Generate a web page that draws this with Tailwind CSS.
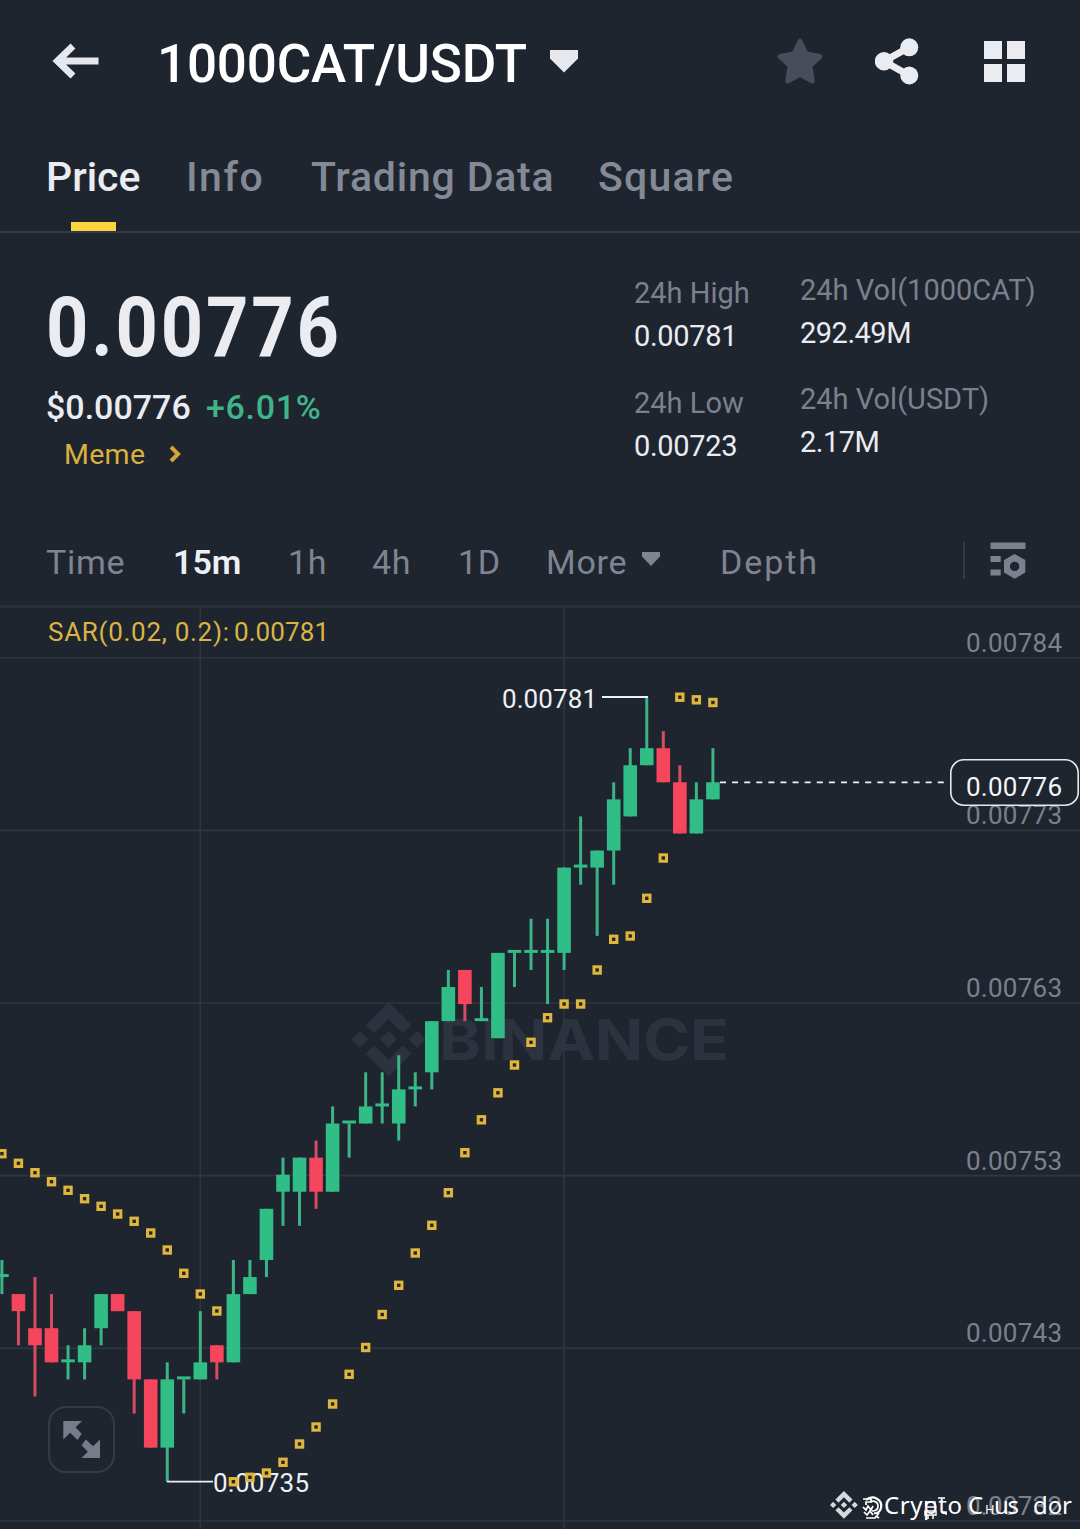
<!DOCTYPE html>
<html lang="en">
<head>
  <meta charset="UTF-8">
  <meta name="viewport" content="width=device-width, initial-scale=1.0">
  <title>1000CAT/USDT</title>
  <script src="https://cdn.jsdelivr.net/npm/@tailwindcss/browser@4"></script>
</head>
<body class="w-[1080px] h-[1529px] overflow-hidden bg-[#1f252f] text-[#eaecf1] font-[Roboto,sans-serif]">
  <!-- Header -->
  <header class="h-[122px] flex items-center pl-[52px] pr-[55px]">
    <svg class="w-[47px] h-[38px] shrink-0" viewBox="52 42.5 47 38" fill="none" stroke="#e6e8ee" stroke-width="7">
      <path d="M73 46.5L57.5 61.5L73 76.5M58 61.5H98.5"/>
    </svg>
    <h1 class="ml-[58px] mt-[5px] w-[369px] text-[53px] leading-[60px] font-medium text-white tracking-[-0.2px] whitespace-nowrap">1000CAT/USDT</h1>
    <svg class="ml-[24px] w-[28px] h-[23px] shrink-0" viewBox="0 0 28 23" fill="#e6e8ee">
      <path d="M0 0H28V8.5L14 22.5L0 8.5Z"/>
    </svg>
    <div class="ml-auto flex items-center">
      <svg class="w-[46px] h-[47px]" viewBox="777.5 38 46 47" fill="#474d59" stroke="#474d59" stroke-width="5" stroke-linejoin="round">
        <path d="M800.5 41L806.5 54L820.5 56.5L810.3 66L812.8 81L800.5 74.3L788.2 81L790.7 66L780.5 56.5L794.5 54Z"/>
      </svg>
      <svg class="ml-[52px] w-[44px] h-[47px]" viewBox="875.5 38 44 47" fill="#eaecf1" stroke="#eaecf1">
        <path d="M909.8 47.3L884.5 61.3L909.8 75.5" fill="none" stroke-width="7"/>
        <circle cx="909.8" cy="47.3" r="9" stroke="none"/>
        <circle cx="909.8" cy="75.5" r="9" stroke="none"/>
        <circle cx="884.5" cy="61.3" r="9.2" stroke="none"/>
      </svg>
      <svg class="ml-[65px] w-[41px] h-[41px]" viewBox="0 0 41 41" fill="#eaecf1">
        <path d="M0 0H18V18H0ZM23 0H41V18H23ZM0 23H18V41H0ZM23 23H41V41H23Z"/>
      </svg>
    </div>
  </header>

  <!-- Tabs -->
  <nav class="h-[111px] flex pl-[46px] pt-[31px] border-b-2 border-[#333944] text-[41px] leading-[48px] font-medium text-[#848996]">
    <div class="w-[140px] text-[#eaecf1]">
      <div class="h-[69px]">Price</div>
      <div class="ml-[25px] w-[45px] h-[9px] bg-[#f9d43c]"></div>
    </div>
    <div class="w-[125px] tracking-[1.5px]">Info</div>
    <div class="w-[287px] tracking-[0.8px] whitespace-nowrap">Trading Data</div>
    <div class="tracking-[1.2px]">Square</div>
  </nav>

  <!-- Price summary -->
  <section class="h-[286px] flex">
    <div class="w-[634px] pl-[46px] pt-[53px] font-medium">
      <div class="text-[84px] leading-[84px] font-bold tracking-[3.2px] origin-left scale-x-[0.88]">0.00776</div>
      <div class="mt-[17px] flex text-[34px] leading-[40px]">
        <span class="w-[160px]">$0.00776</span>
        <span class="text-[#3fb488] tracking-[0.7px]">+6.01%</span>
      </div>
      <div class="mt-[11px] ml-[18px] flex items-center text-[28.5px] leading-[34px] font-normal text-[#d9b13d]">
        <span class="w-[105px] tracking-[0.3px]">Meme</span>
        <svg class="-mt-[2px] w-[13px] h-[18px]" viewBox="0 0 13 18" fill="none" stroke="#d3a637" stroke-width="4">
          <path d="M2 2L9 9L2 16"/>
        </svg>
      </div>
    </div>
    <div class="w-[166px] pt-[39px] text-[29px] leading-[43px]">
      <div class="text-[#7b808d]">24h High</div>
      <div class="tracking-[-0.3px]">0.00781</div>
      <div class="mt-[24px] text-[#7b808d]">24h Low</div>
      <div class="tracking-[-0.3px]">0.00723</div>
    </div>
    <div class="pt-[36px] text-[29px] leading-[42.5px] whitespace-nowrap">
      <div class="text-[#7b808d]">24h Vol(1000CAT)</div>
      <div class="tracking-[-0.5px]">292.49M</div>
      <div class="mt-[24px] text-[#7b808d]">24h Vol(USDT)</div>
      <div class="tracking-[-0.5px]">2.17M</div>
    </div>
  </section>

  <!-- Interval picker -->
  <div class="h-[89px] flex items-center pl-[46px] pr-[54px] border-b-3 border-[#2a303b] text-[34px] leading-[40px] text-[#7f8491] tracking-[0.7px]">
    <span class="w-[127px]">Time</span>
    <span class="w-[115px] font-semibold text-[#eef0f5] tracking-normal">15m</span>
    <span class="w-[84px]">1h</span>
    <span class="w-[86px]">4h</span>
    <span class="w-[88px]">1D</span>
    <span class="w-[96px]">More</span>
    <svg class="-mt-[6px] w-[18px] h-[14px]" viewBox="0 0 18 14" fill="#7f8491">
      <path d="M0 0H18V4.5L9 14L0 4.5Z"/>
    </svg>
    <span class="ml-[60px] tracking-[1.9px]">Depth</span>
    <div class="ml-auto mr-[25px] -mt-[4px] w-[2px] h-[37px] bg-[#343b46]"></div>
    <svg class="-mt-[4px] w-[36px] h-[37px]" viewBox="990 541.5 36 37" fill="#7c818e">
      <path d="M990.5 542H1025.5V548.5H990.5ZM990.5 555.5H1000.7V561.5H990.5ZM990.5 569H1000.7V575H990.5Z"/>
      <path fill-rule="evenodd" d="M1014.6 553.5L1025.3 559.5V572L1014.6 578.2L1004 572V559.5ZM1014.6 561.2A4.7 4.7 0 1 0 1014.6 570.6A4.7 4.7 0 1 0 1014.6 561.2Z"/>
    </svg>
  </div>

  <!-- Chart -->
  <main class="relative h-[921px]">
    <svg id="chart" class="block w-[1080px] h-[921px]" viewBox="0 608 1080 921" font-size="26">
      <defs>
        <path id="logo" d="M38.73 53.2l24.59-24.58 24.6 24.6 14.3-14.31L63.32 0 24.42 38.9zM0 63.31L14.3 49l14.31 14.31-14.31 14.3zM38.73 73.41l24.59 24.59 24.6-24.6 14.31 14.29-38.91 38.91-38.91-38.88zM98 63.31l14.3-14.31 14.31 14.3-14.31 14.32zM77.83 63.3L63.32 48.78 48.81 63.28l14.51 14.5z"/>
      </defs>
      <!-- watermark -->
      <g fill="#2d333e">
        <use href="#logo" transform="translate(351.5 1002.3) scale(0.585)"/>
        <text x="439" y="1060" font-family="Inter, sans-serif" font-weight="700" font-size="57" textLength="290" lengthAdjust="spacingAndGlyphs">BINANCE</text>
      </g>
      <g id="grid" stroke="#303641" stroke-width="1.6"></g>
      <g id="axis" fill="#7b808d"></g>
      <g id="candles"></g>
      <g fill="#eef0f5">
        <path d="M602 697H648M167 1481.7H213" stroke="#eef0f5" stroke-width="1.8"/>
        <text x="502" y="707.7" textLength="95">0.00781</text>
        <text x="213" y="1491.8" textLength="96">0.00735</text>
      </g>
      <g id="sar" fill="#2a2413" stroke="#dfb740" stroke-width="3"></g>
      <g fill="#d9b445">
        <text x="48" y="640.5" textLength="181">SAR(0.02, 0.2):</text>
        <text x="234" y="640.5" textLength="95">0.00781</text>
      </g>
      <path d="M720 782.3H944" stroke="#eef0f5" stroke-width="1.8" stroke-dasharray="6 6.1"/>
      <rect x="950.8" y="759.8" width="127.4" height="45.4" rx="13" fill="#1f252f" stroke="#e6e8ee" stroke-width="1.6"/>
      <text x="966" y="795.7" fill="#f4f5f8" textLength="96">0.00776</text>
      <!-- author mark -->
      <g fill="#ffffff" font-family="'Noto Sans', sans-serif" font-size="24">
        <use href="#logo" fill="#d6d8dc" transform="translate(830 1491) scale(0.22)"/>
        <path d="M866 1500C873 1494 883 1500 881 1508C880 1512 877 1514 874 1513" fill="none" stroke="#ffffff" stroke-width="2.2"/>
        <path d="M863 1499h8v3h-5v3M870 1502c4-2 8 0 8 4s-3 5-6 5M863 1507l3 3 2-4 3 4 2-4M864 1512l3 3 3-4 3 4M866 1518h9l4-5M876 1516l3 2" fill="none" stroke="#ffffff" stroke-width="1.7"/>
        <text x="884" y="1513.5" textLength="78">Crypto</text>
        <path d="M926 1502h9v5h-9zM925 1511h11v4h-11zM928 1515v4M933 1515v4M938 1498h7M941 1512h5v3" fill="none" stroke="#ffffff" stroke-width="1.5"/>
        <text x="968" y="1513.5" textLength="17">C</text>
        <text x="985" y="1513.5" font-size="13">H</text>
        <text x="994" y="1513.5" textLength="25">us</text>
        <text x="1033" y="1513.5" textLength="39">dor</text>
      </g>
    </svg>
    <!-- expand button -->
    <button class="absolute left-[48px] top-[798px] w-[67px] h-[67px] rounded-[18px] border-2 border-[#353b46] bg-[#1f252f]">
      <svg class="w-[63px] h-[63px]" viewBox="50 1408 63 63" fill="#777c89">
        <path d="M63.3 1421H82L75.5 1427.3L81.7 1433.8L77.5 1440L70.2 1432.7L63.3 1439.5Z"/>
        <path d="M100 1458H81.3L87.8 1451.7L81.6 1445.2L85.8 1439.5L93.1 1446.3L100 1439.5Z"/>
      </svg>
    </button>
  </main>

  <script>
    // [open, close, high, low], last digits of the price
    const candles = [
      [747, 747, 748, 746], [746, 745, 746, 743], [744, 743, 747, 740], [744, 742, 746, 742],
      [742, 742, 743, 741], [742, 743, 744, 741], [744, 746, 746, 743], [746, 745, 746, 745],
      [745, 741, 745, 739], [741, 737, 741, 737], [737, 741, 742, 735], [741, 741, 741, 739],
      [741, 742, 745, 741], [743, 742, 743, 741], [742, 746, 748, 742], [746, 747, 748, 746],
      [748, 751, 751, 747], [752, 753, 754, 750], [752, 754, 754, 750], [754, 752, 755, 751],
      [752, 756, 757, 752], [756, 756, 756, 754], [756, 757, 759, 756], [757, 757, 759, 756],
      [756, 758, 760, 755], [758, 758, 759, 757], [759, 762, 762, 758], [762, 764, 765, 762],
      [765, 763, 765, 762], [762, 762, 764, 762], [761, 766, 766, 761], [766, 766, 766, 764],
      [766, 766, 768, 765], [766, 766, 768, 763], [766, 771, 771, 765], [771, 771, 774, 770],
      [771, 772, 772, 767], [772, 775, 776, 770], [774, 777, 778, 774], [777, 778, 781, 777],
      [778, 776, 779, 776], [776, 773, 777, 773], [773, 775, 776, 773], [775, 776, 778, 775]
    ];
    const sar = [
      1153.7, 1163.3, 1172.7, 1181.7, 1190.3, 1198.7, 1206.3, 1214, 1221.3, 1233, 1250,
      1273.3, 1294, 1311, 1481.7, 1477.3, 1473, 1462.3, 1444, 1427, 1404, 1374.3,
      1347.5, 1314.5, 1285.3, 1253, 1225.3, 1192.7, 1152.7, 1119.8, 1092.8, 1065,
      1042.3, 1017.7, 1004, 1004, 970, 939.3, 936, 898.3, 858, 697.2, 699.8, 702.5
    ];
    const x = i => 1.9 + i * 16.535;
    const y = p => 697 + (781 - p) * 17.06;

    let html = '';
    candles.forEach(([o, c, h, l], i) => {
      const up = c >= o;
      const top = o === c ? y(o) - 3 : y(Math.max(o, c));
      const height = Math.max(3, y(Math.min(o, c)) - top);
      html += `<rect x="${x(i) - 1.5}" y="${y(h)}" width="3" height="${y(l) - y(h)}" fill="${up ? '#3cb487' : '#d64d63'}"/>`;
      html += `<rect x="${x(i) - 6.8}" y="${top}" width="13.6" height="${height}" fill="${up ? '#30bd86' : '#f6465d'}"/>`;
    });
    document.getElementById('candles').innerHTML = html;

    document.getElementById('sar').innerHTML = sar.map((v, i) =>
      `<rect x="${x(i) - 3.2}" y="${v - 3.2}" width="6.4" height="6.4"/>`).join('');

    let lines = '<path d="M200.3 608V1529M564 608V1529"/>';
    let labels = '';
    ['0.00784', '0.00773', '0.00763', '0.00753', '0.00743', '0.00732'].forEach((t, i) => {
      lines += `<path d="M0 ${657.7 + i * 172.65}H1080"/>`;
      labels += `<text x="966" y="${651.7 + i * 172.65}" textLength="96">${t}</text>`;
    });
    document.getElementById('grid').innerHTML = lines;
    document.getElementById('axis').innerHTML = labels;
  </script>
</body>
</html>
